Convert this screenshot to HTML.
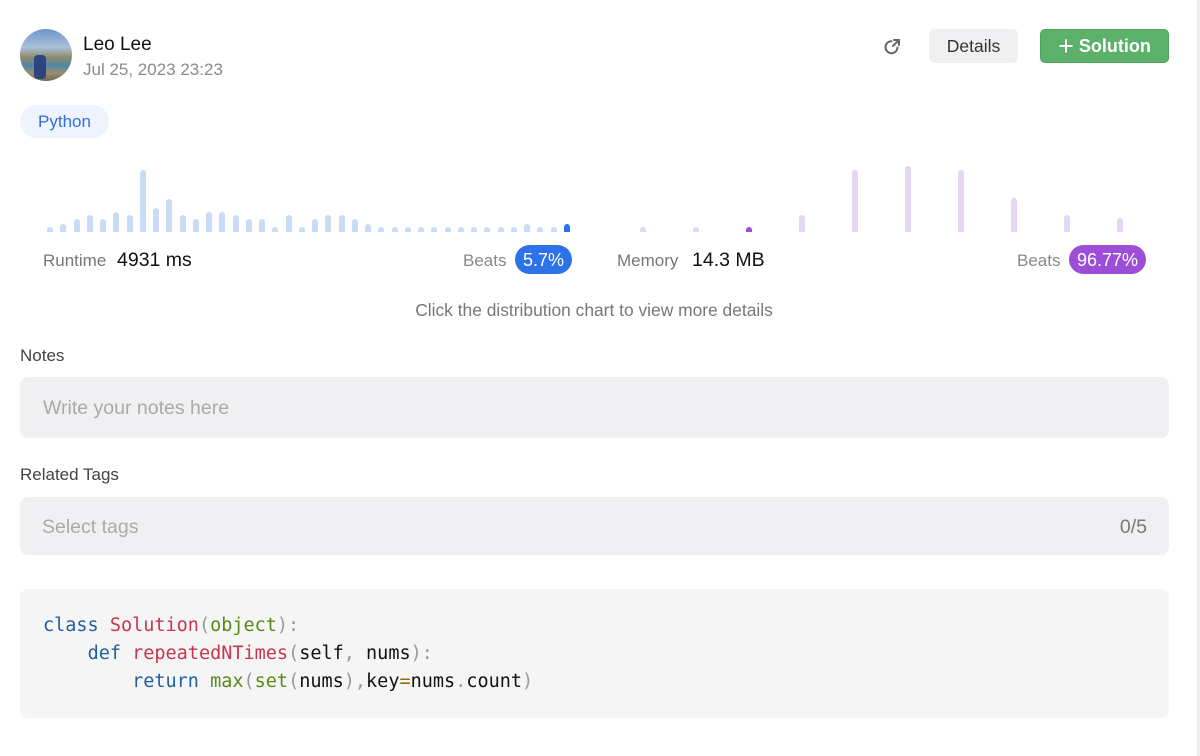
<!DOCTYPE html>
<html><head><meta charset="utf-8"><style>
*{margin:0;padding:0;box-sizing:border-box}
body{width:1200px;height:756px;background:#fff;font-family:"Liberation Sans",sans-serif;position:relative;overflow:hidden}
.a{position:absolute}
.bar{position:absolute;width:6px;border-radius:3px 3px 0 0;background:#c8dcf8}
.mb{position:absolute;width:6px;border-radius:3px 3px 0 0;background:#e6d5f3}
.code{font-family:"DejaVu Sans Mono","Liberation Mono",monospace;font-size:18.5px;line-height:28px;white-space:pre;color:#111}
.k{color:#1f5f9e}.f{color:#c7364d}.g{color:#5a8a16}.p{color:#999}
</style></head><body>
<div class="a" style="right:0;top:0;width:3px;height:756px;background:#eee"></div>
<div class="a" style="left:20px;top:29px;width:52px;height:52px;border-radius:50%;background:linear-gradient(#6d95c6 0%,#a9c1db 35%,#8e8a6a 55%,#4f86a8 70%,#9a8f6e 85%,#6f6a50 100%)"></div>
<div class="a" style="left:34px;top:55px;width:12px;height:24px;background:#2c4480;border-radius:4px"></div>
<div class="a" style="left:83px;top:34px;font-size:19px;color:#111">Leo Lee</div>
<div class="a" style="left:83px;top:60px;font-size:17px;color:#8a8a8a">Jul 25, 2023 23:23</div>
<svg class="a" style="left:882px;top:37px" width="20" height="20" viewBox="0 0 20 20" fill="none" stroke="#666" stroke-width="2" stroke-linecap="round"><path d="M15.5 10.5A6 6 0 1 1 9.5 4.2"/><path d="M12 3h5v5M17 3l-6 6"/></svg>
<div class="a" style="left:929px;top:29px;width:89px;height:34px;border-radius:5px;background:#f0f0f2;color:#333;font-size:17.5px;text-align:center;line-height:35px">Details</div>
<div class="a" style="left:1040px;top:29px;width:129px;height:34px;border-radius:5px;background:#5cb16a;border:1px solid #4ea25c;color:#fff;font-size:18px;line-height:33px;text-align:center;font-weight:bold"><span style="font-weight:normal;font-size:27px;vertical-align:-3px">+</span> Solution</div>
<div class="a" style="left:20px;top:105px;width:89px;height:33px;border-radius:17px;background:#eef3fe;color:#2f6ee0;font-size:17px;line-height:33px;text-align:center">Python</div>
<div id="rb"></div>
<div class="a" style="left:43px;top:251px;font-size:17px;color:#777">Runtime</div>
<div class="a" style="left:117px;top:249px;font-size:19.5px;color:#111">4931 ms</div>
<div class="a" style="left:463px;top:251px;font-size:17px;color:#888">Beats</div>
<div class="a" style="left:515px;top:245px;width:57px;height:29px;border-radius:15px;background:#2d72e8;color:#fff;font-size:18px;line-height:30px;text-align:center">5.7%</div>
<div class="a" style="left:617px;top:251px;font-size:17px;color:#777">Memory</div>
<div class="a" style="left:692px;top:249px;font-size:19.5px;color:#111">14.3 MB</div>
<div class="a" style="left:1017px;top:251px;font-size:17px;color:#888">Beats</div>
<div class="a" style="left:1069px;top:245px;width:77px;height:29px;border-radius:15px;background:#9c4fd6;color:#fff;font-size:18px;line-height:30px;text-align:center">96.77%</div>
<div class="a" style="left:0;width:1188px;top:300px;text-align:center;font-size:17.4px;color:#777">Click the distribution chart to view more details</div>
<div class="a" style="left:20px;top:346px;font-size:17px;color:#444">Notes</div>
<div class="a" style="left:20px;top:377px;width:1149px;height:61px;border-radius:8px;background:#f0f0f2;color:#aaa;font-size:19.5px;line-height:63px;padding-left:23px">Write your notes here</div>
<div class="a" style="left:20px;top:465px;font-size:17px;color:#444">Related Tags</div>
<div class="a" style="left:20px;top:497px;width:1149px;height:58px;border-radius:8px;background:#f0f0f2;color:#aaa;font-size:19.5px;line-height:60px;padding-left:22px">Select tags<span style="position:absolute;right:22px;color:#777">0/5</span></div>
<div class="a" style="left:20px;top:589px;width:1149px;height:129px;border-radius:8px;background:#f5f5f5"></div>
<div class="a code" style="left:43px;top:612px"><span class="k">class</span> <span class="f">Solution</span><span class="p">(</span><span class="g">object</span><span class="p">):</span>
    <span class="k">def</span> <span class="f">repeatedNTimes</span><span class="p">(</span>self<span class="p">,</span> nums<span class="p">):</span>
        <span class="k">return</span> <span class="g">max</span><span class="p">(</span><span class="g">set</span><span class="p">(</span>nums<span class="p">),</span>key<span style="color:#9a6a00">=</span>nums<span class="p">.</span>count<span class="p">)</span></div>
<script>
var h=[2.5,5,10,14,10,17,14,59,21,30,14,10,17,17,14,10,10,2.5,14,2.5,10,14,14,10,5,2.5,2.5,2.5,2.5,2.5,2.5,2.5,2.5,2.5,2.5,2.5,5,2.5,2.5,5];
var s='';
for(var i=0;i<40;i++){var x=47+i*13.25;s+='<div class="bar" style="left:'+x+'px;top:'+(232-h[i]-3)+'px;height:'+(h[i]+3)+'px;'+(i==39?'background:#2d72e8':'')+'"></div>';}
var m=[2.5,2.5,2.5,14,59,63,59,31,14,11];
for(var j=0;j<10;j++){var x=640+j*53;s+='<div class="mb" style="left:'+x+'px;top:'+(232-m[j]-3)+'px;height:'+(m[j]+3)+'px;'+(j==2?'background:#9c4fd6':'')+'"></div>';}
document.getElementById('rb').innerHTML=s;
</script>
</body></html>
